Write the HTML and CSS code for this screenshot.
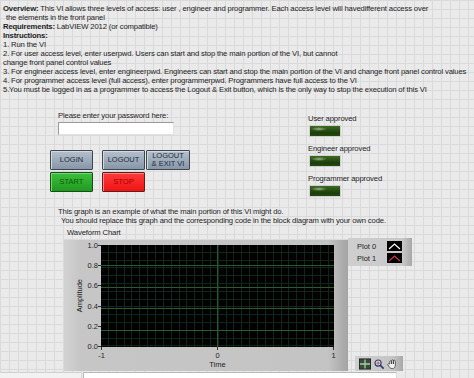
FILE: index.html
```html
<!DOCTYPE html>
<html>
<head>
  <title>Access Levels</title>
  <meta charset="utf-8">
  <meta name="viewport" content="width=device-width, initial-scale=1.0">
  <link rel="stylesheet" href="styles.css">
</head>
<body>
  <div class="notes">
    <p><b>Overview:</b> This VI allows three levels of access: user , engineer and programmer. Each access level will havedifferent access over</p>
    <p class="indent">the elements in the front panel</p>
    <p><b>Requirements:</b> LabVIEW 2012 (or compatible)</p>
    <p><b>Instructions:</b></p>
    <p>1. Run the VI</p>
    <p>2. For user access level, enter userpwd. Users can start and stop the main portion of the VI, but cannot</p>
    <p>change front panel control values</p>
    <p>3. For engineer access level, enter engineerpwd. Engineers can start and stop the main portion of the VI and change front panel control values</p>
    <p>4. For programmer access level (full access), enter programmerpwd. Programmers have full access to the VI</p>
    <p>5.You must be logged in as a programmer to access the Logout &amp; Exit button, which is the only way to stop the execution of this VI</p>
  </div>

  <div class="controls">
    <div class="login-side">
      <label class="caption pass-caption" for="password">Please enter your password here:</label>
      <input type="password" id="password" class="password">
      <div class="buttons">
        <button class="btn btn-silver">LOGIN</button>
        <button class="btn btn-silver second">LOGOUT</button>
        <button class="btn btn-silver two-line">LOGOUT<br>&amp; EXIT VI</button>
        <button class="btn btn-start">START</button>
        <button class="btn btn-stop second">STOP</button>
      </div>
    </div>

    <div class="leds">
      <div class="led-group">
        <span class="caption">User approved</span>
        <span class="led"></span>
      </div>
      <div class="led-group">
        <span class="caption">Engineer approved</span>
        <span class="led"></span>
      </div>
      <div class="led-group">
        <span class="caption">Programmer approved</span>
        <span class="led"></span>
      </div>
    </div>
  </div>

  <div class="graph-note">
    <p>This graph is an example of what the main portion of this VI might do.</p>
    <p class="indent">You should replace this graph and the corresponding code in the block diagram with your own code.</p>
  </div>

  <div class="chart-label">Waveform Chart</div>
  <div class="chart-row">
    <div class="chart-frame">
      <div class="axis-title">Amplitude</div>
      <div class="y-labels">
        <span>1.0</span><span>0.8</span><span>0.6</span><span>0.4</span><span>0.2</span><span>0.0</span>
      </div>
      <div class="y-ticks">
        <i></i><i></i><i></i><i></i><i></i><i></i>
      </div>
      <div class="plot"></div>
      <div class="x-ticks"><i></i><i></i><i></i></div>
      <div class="x-labels"><span>-1</span><span>0</span><span>1</span></div>
      <div class="x-title">Time</div>
    </div>

    <div class="chart-side">
      <div class="legend">
        <div class="legend-row">
          <span>Plot 0</span>
          <svg class="swatch" width="15" height="10" viewBox="0 0 15 10">
            <rect width="15" height="10" fill="#000"/>
            <polyline points="2,8 7.5,3 13,8" fill="none" stroke="#fff" stroke-width="1.2"/>
          </svg>
        </div>
        <div class="legend-row">
          <span>Plot 1</span>
          <svg class="swatch" width="15" height="10" viewBox="0 0 15 10">
            <rect width="15" height="10" fill="#000"/>
            <polyline points="2,8 7.5,3 13,8" fill="none" stroke="#c23a4a" stroke-width="1.2"/>
          </svg>
        </div>
      </div>

      <div class="palette">
        <svg width="13" height="12" viewBox="0 0 13 12">
          <rect x="0.5" y="0.5" width="12" height="11" fill="#3c4a3c" stroke="#222"/>
          <path d="M6.5 1v10M1 6h11" stroke="#9fd39f" stroke-width="1.4"/>
        </svg>
        <svg width="13" height="12" viewBox="0 0 13 12">
          <circle cx="5.5" cy="5" r="3.3" fill="#dfe8f2" stroke="#2a3a6a" stroke-width="1.2"/>
          <path d="M8 7.5l3.5 3.5" stroke="#2a3a6a" stroke-width="1.8"/>
          <path d="M5.5 3v4M3.5 5h4" stroke="#c03030" stroke-width="0.9"/>
        </svg>
        <svg width="13" height="12" viewBox="0 0 13 12">
          <path d="M3 6V3.5a1 1 0 0 1 2 0V6V2.5a1 1 0 0 1 2 0V6V3a1 1 0 0 1 2 0v4.5c0 2-1.3 3.5-3.3 3.5C4 11 3 9.8 2 8.5L1 7a1 1 0 0 1 1.6-1.1z" fill="#f2f2f2" stroke="#333" stroke-width="0.8"/>
        </svg>
      </div>
    </div>
  </div>

  <div class="bottom-strip">
    <span class="strip-left"></span>
    <span class="strip-right"></span>
  </div>
</body>
</html>
```

FILE: styles.css
```css
html,
body {
  margin: 0;
  padding: 0;
}

body {
  width: 474px;
  height: 378px;
  overflow: hidden;
  font-family: "Liberation Sans", Arial, sans-serif;
  font-size: 7.7px;
  letter-spacing: -0.15px;
  color: #1e1e1e;
  background-color: #eaeaea;
  background-image:
    linear-gradient(#dadada 1px, transparent 1px),
    linear-gradient(90deg, #dadada 1px, transparent 1px);
  background-size: 9px 9px;
}

p {
  margin: 0;
}

/* instructions block */
.notes {
  padding: 4px 0 0 3px;
  line-height: 9px;
  white-space: nowrap;
}

.indent {
  padding-left: 3px;
}

/* password, buttons and LEDs */
.controls {
  display: flex;
  margin-top: 17px;
}

.login-side {
  margin-left: 50px;
  width: 140px;
}

.caption {
  display: block;
  line-height: 9px;
  white-space: nowrap;
}

.pass-caption {
  padding-left: 8px;
}

.password {
  display: block;
  box-sizing: border-box;
  width: 116px;
  height: 13px;
  margin: 2px 0 0 8px;
  padding: 0;
  background: #fff;
  border: 1px solid;
  border-color: #9a9a9a #e2e2e2 #e2e2e2 #9a9a9a;
}

.buttons {
  display: grid;
  grid-template-columns: 43px 51px 44px;
  grid-template-rows: 20px 20px;
  column-gap: 1px;
  row-gap: 2px;
  margin-top: 15px;
}

.btn {
  box-sizing: border-box;
  width: 100%;
  height: 20px;
  padding: 0;
  font-family: inherit;
  font-size: 7.5px;
  line-height: 8px;
  letter-spacing: 0;
  border: 1px solid #3e4650;
  border-radius: 1px;
  cursor: pointer;
}

.second {
  width: 43px;
  justify-self: end;
}

.btn-silver {
  color: #1d2b3c;
  background: linear-gradient(#b4c0cc, #8797a8);
  box-shadow: inset 1px 1px 0 #d0d8e0;
}

.btn-start {
  color: #0b5a0b;
  background: linear-gradient(#3cc03c, #1f9a1f);
  border-color: #1d4a1d;
  box-shadow: inset 1px 1px 0 #70d870;
}

.btn-stop {
  color: #9c0000;
  background: linear-gradient(#ff3a3a, #f01414);
  border-color: #5a2020;
  box-shadow: inset 1px 1px 0 #ff8080;
}

.leds {
  margin-left: 118px;
  padding-top: 3px;
}

.led-group + .led-group {
  margin-top: 7px;
}

.led {
  display: block;
  box-sizing: border-box;
  width: 32px;
  height: 12px;
  margin: 2px 0 0 1px;
  border: 1px solid #cfcfcf;
  background:
    radial-gradient(ellipse 8px 2px at 9px 3px, #9db38c, rgba(120, 160, 100, 0) 100%),
    linear-gradient(#3d6a22, #1c3d0a 70%, #244a10);
}

/* chart */
.graph-note {
  margin: 10px 0 0 58px;
  line-height: 9px;
  white-space: nowrap;
}

.chart-label {
  margin: 3px 0 0 67px;
  line-height: 9px;
}

.chart-row {
  display: flex;
  align-items: flex-start;
  margin: 2px 0 0 63px;
}

.chart-frame {
  box-sizing: border-box;
  width: 285px;
  height: 132px;
  padding: 5px 14px 0 10px;
  display: grid;
  grid-template-columns: 10px 14px 3px 233px;
  grid-template-rows: 102px 4px 9px 9px;
  background: linear-gradient(90deg, #d2d2d2, #c6c6c6 6%, #c4c4c4 93%, #a4a4a4);
  border-top: 1px solid #dadada;
  border-left: 1px solid #dadada;
  font-size: 7.5px;
  letter-spacing: 0;
}

.axis-title {
  grid-column: 1;
  grid-row: 1;
  align-self: center;
  justify-self: center;
  writing-mode: vertical-rl;
  transform: rotate(180deg);
  line-height: 9px;
}

.y-labels {
  grid-column: 2;
  grid-row: 1;
  display: flex;
  flex-direction: column;
  justify-content: space-between;
  margin: -4.5px 0;
  text-align: right;
  line-height: 9px;
}

.y-ticks {
  grid-column: 3;
  grid-row: 1;
  display: flex;
  flex-direction: column;
  justify-content: space-between;
  margin: -0.5px 0;
}

.y-ticks i {
  display: block;
  height: 1px;
  background: #333;
}

.plot {
  grid-column: 4;
  grid-row: 1;
  background-color: #000;
  background-image:
    linear-gradient(90deg, transparent 116px, #2c5a2f 116px, #2c5a2f 117px, transparent 117px),
    repeating-linear-gradient(transparent 0, transparent 20.4px, #2c5a2f 20.4px, #2c5a2f 21.4px),
    repeating-linear-gradient(transparent 0, transparent 6.8px, #10261a 6.8px, #10261a 7.8px),
    repeating-linear-gradient(90deg, transparent 0, transparent 6.85px, #10261a 6.85px, #10261a 7.85px);
}

.x-ticks {
  grid-column: 4;
  grid-row: 2;
  display: flex;
  justify-content: space-between;
}

.x-ticks i {
  display: block;
  width: 1px;
  height: 3px;
  background: #333;
}

.x-labels {
  grid-column: 4;
  grid-row: 3;
  display: flex;
  justify-content: space-between;
  margin: 0 -5px;
  line-height: 9px;
}

.x-labels span {
  width: 11px;
  text-align: center;
}

.x-title {
  grid-column: 4;
  grid-row: 4;
  text-align: center;
  line-height: 9px;
}

.chart-side {
  display: flex;
  flex-direction: column;
  height: 132px;
}

.legend {
  box-sizing: border-box;
  width: 64px;
  height: 28px;
  margin-top: -1px;
  padding: 2px 10px 0 9px;
  background: linear-gradient(90deg, #cfcfcf, #c8c8c8 85%, #a8a8a8);
  font-size: 7.5px;
  letter-spacing: 0;
}

.legend-row {
  display: flex;
  justify-content: space-between;
  align-items: center;
  height: 12px;
}

.swatch {
  display: block;
}

.palette {
  display: flex;
  gap: 2px;
  box-sizing: border-box;
  width: 48px;
  height: 15px;
  margin: auto 0 0 7px;
  padding: 2px 4px;
  background: linear-gradient(90deg, #d0d0d0, #c4c4c4 80%, #a8a8a8);
}

.bottom-strip {
  display: flex;
  margin-top: 1px;
  height: 6px;
}

.strip-left {
  width: 81px;
  background: #f2f2f2;
  border-top: 1px solid #d0d0d0;
}

.strip-right {
  width: 312px;
  margin-left: 2px;
  background: #fff;
  border-top: 1px solid #b8b8b8;
  border-left: 1px solid #b8b8b8;
}
```
